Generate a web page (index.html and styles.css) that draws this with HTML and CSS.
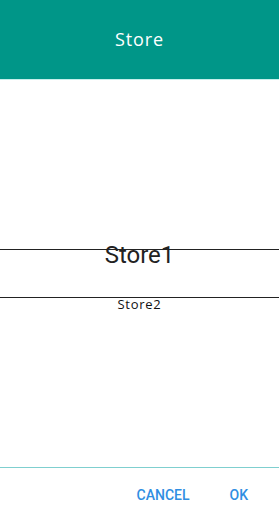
FILE: index.html
```html
<!DOCTYPE html>
<html lang="en">
<head>
  <meta charset="UTF-8" />
  <meta name="viewport" content="width=device-width, initial-scale=1.0"/>
  <title>Store</title>
  <link rel="stylesheet" href="styles.css">
</head>
<body>
  <div class="dialog">
    <div class="dialog-title">Store</div>

    <div class="picker">
      <div class="picker-band"></div>
      <div class="picker-list">
        <div class="picker-item selected">Store1</div>
        <div class="picker-item">Store2</div>
      </div>
    </div>

    <div class="dialog-actions">
      <button class="action">CANCEL</button>
      <button class="action">OK</button>
    </div>
  </div>
</body>
</html>
```

FILE: styles.css
```css
html, body {
  margin: 0;
  padding: 0;
  background: #fff;
}

.dialog {
  display: flex;
  flex-direction: column;
  width: 279px;
  height: 518px;
}

.dialog-title {
  height: 79px;
  line-height: 79px;
  background: #009688;
  border-bottom: 1px solid #c6efeb;
  color: #fff;
  text-align: center;
  font-family: "Open Sans", sans-serif;
  font-size: 18px;
  letter-spacing: 0.9px;
}

.picker {
  position: relative;
  flex: 1;
  border-bottom: 1px solid #7fcfcf;
}

.picker-band {
  position: absolute;
  left: 0;
  right: 0;
  top: 169px;
  height: 47px;
  border-top: 1px solid #222;
  border-bottom: 1px solid #222;
}

.picker-list {
  padding-top: 163px;
  text-align: center;
}

.picker-item {
  font-family: "Open Sans", sans-serif;
  font-size: 13px;
  line-height: 13px;
  letter-spacing: 0.75px;
  color: #111;
  margin-top: 31px;
}

.picker-item.selected {
  font-family: Roboto, sans-serif;
  font-size: 24px;
  line-height: 24px;
  letter-spacing: 0;
  color: #222;
  margin-top: 0;
}

.dialog-actions {
  height: 50px;
  box-sizing: border-box;
  padding: 17px 31px 0 0;
  display: flex;
  justify-content: flex-end;
  gap: 40px;
}

.action {
  border: none;
  background: none;
  padding: 0;
  font-family: Roboto, sans-serif;
  font-weight: 500;
  font-size: 14px;
  line-height: 20px;
  height: 20px;
  color: #2f8ee2;
}
```
